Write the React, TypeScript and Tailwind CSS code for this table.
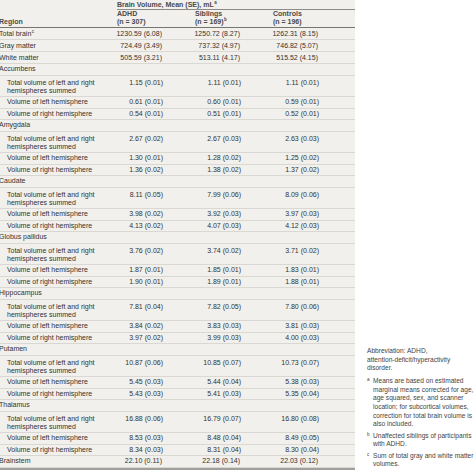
import type { ReactNode } from "react";

type Triple = [string, string, string];

type Group = {
  name: string;
  total: Triple;
  left: Triple;
  right: Triple;
};

function Sup({ children }: { children: ReactNode }) {
  return <span className="relative -top-[2.5px] ml-[0.5px] text-[4.5px] leading-[0]">{children}</span>;
}

const topRows: { label: ReactNode; values: Triple }[] = [
  {
    label: (
      <>
        Total brain<Sup>c</Sup>
      </>
    ),
    values: ["1230.59 (6.08)", "1250.72 (8.27)", "1262.31 (8.15)"]
  },
  { label: "Gray matter", values: ["724.49 (3.49)", "737.32 (4.97)", "746.82 (5.07)"] },
  { label: "White matter", values: ["505.59 (3.21)", "513.11 (4.17)", "515.52 (4.15)"] }
];

const groups: Group[] = [
  {
    name: "Accumbens",
    total: ["1.15 (0.01)", "1.11 (0.01)", "1.11 (0.01)"],
    left: ["0.61 (0.01)", "0.60 (0.01)", "0.59 (0.01)"],
    right: ["0.54 (0.01)", "0.51 (0.01)", "0.52 (0.01)"]
  },
  {
    name: "Amygdala",
    total: ["2.67 (0.02)", "2.67 (0.03)", "2.63 (0.03)"],
    left: ["1.30 (0.01)", "1.28 (0.02)", "1.25 (0.02)"],
    right: ["1.36 (0.02)", "1.38 (0.02)", "1.37 (0.02)"]
  },
  {
    name: "Caudate",
    total: ["8.11 (0.05)", "7.99 (0.06)", "8.09 (0.06)"],
    left: ["3.98 (0.02)", "3.92 (0.03)", "3.97 (0.03)"],
    right: ["4.13 (0.02)", "4.07 (0.03)", "4.12 (0.03)"]
  },
  {
    name: "Globus pallidus",
    total: ["3.76 (0.02)", "3.74 (0.02)", "3.71 (0.02)"],
    left: ["1.87 (0.01)", "1.85 (0.01)", "1.83 (0.01)"],
    right: ["1.90 (0.01)", "1.89 (0.01)", "1.88 (0.01)"]
  },
  {
    name: "Hippocampus",
    total: ["7.81 (0.04)", "7.82 (0.05)", "7.80 (0.06)"],
    left: ["3.84 (0.02)", "3.83 (0.03)", "3.81 (0.03)"],
    right: ["3.97 (0.02)", "3.99 (0.03)", "4.00 (0.03)"]
  },
  {
    name: "Putamen",
    total: ["10.87 (0.06)", "10.85 (0.07)", "10.73 (0.07)"],
    left: ["5.45 (0.03)", "5.44 (0.04)", "5.38 (0.03)"],
    right: ["5.43 (0.03)", "5.41 (0.03)", "5.35 (0.04)"]
  },
  {
    name: "Thalamus",
    total: ["16.88 (0.06)", "16.79 (0.07)", "16.80 (0.08)"],
    left: ["8.53 (0.03)", "8.48 (0.04)", "8.49 (0.05)"],
    right: ["8.34 (0.03)", "8.31 (0.04)", "8.30 (0.04)"]
  }
];

function Values({ values }: { values: Triple }) {
  return (
    <>
      {values.map((v, i) => (
        <div key={i} className="w-[78px] shrink-0">
          <div className="w-[46px] text-right whitespace-nowrap">{v}</div>
        </div>
      ))}
    </>
  );
}

function Row({
  label,
  values,
  indent,
  tall,
  height = "h-[11.5px]"
}: {
  label: ReactNode;
  values?: Triple;
  indent?: boolean;
  tall?: boolean;
  height?: string;
}) {
  return (
    <div
      className={`flex border-b border-[#d9d8d3] ${
        tall ? "h-[21.5px] items-start pt-[3px]" : `${height} items-center`
      }`}
    >
      <div className={`w-[117px] shrink-0 whitespace-nowrap ${indent ? "pl-[7px]" : "-ml-[1px]"}`}>{label}</div>
      {values ? <Values values={values} /> : null}
    </div>
  );
}

export default function App() {
  return (
    <div className="flex h-[470px] w-[474px] overflow-hidden bg-white text-[#333]">
      <div className="w-[355px] shrink-0 bg-[#f1f0ec] font-['Liberation_Sans',Arial,sans-serif] text-[7px] leading-[8px]">
        {/* spanning header */}
        <div className="flex h-[9.5px]">
          <div className="w-[117px] shrink-0" />
          <div className="flex flex-1 items-end border-b-[1.5px] border-[#8c8b88] pb-[1px] font-bold leading-[7px] text-[#4a4a4a]">
            <span>
              Brain Volume, Mean (SE), mL<Sup>a</Sup>
            </span>
          </div>
        </div>

        {/* column headers */}
        <div className="flex h-[18.5px] items-end border-b-[1.5px] border-[#76756f] pb-[1.5px] font-bold text-[#4a4a4a]">
          <div className="-ml-[1px] w-[118px] shrink-0">Region</div>
          <div className="w-[78px] shrink-0">
            ADHD
            <br />
            (n = 307)
          </div>
          <div className="w-[78px] shrink-0">
            Siblings
            <br />
            (n = 169)<Sup>b</Sup>
          </div>
          <div className="w-[78px] shrink-0">
            Controls
            <br />
            (n = 196)
          </div>
        </div>

        {topRows.map((r, i) => (
          <Row key={i} label={r.label} values={r.values} height="h-[12px]" />
        ))}

        {groups.map((g) => (
          <div key={g.name}>
            <Row label={g.name} />
            <Row
              indent
              tall
              label={
                <>
                  Total volume of left and right
                  <br />
                  hemispheres summed
                </>
              }
              values={g.total}
            />
            <Row indent label="Volume of left hemisphere" values={g.left} />
            <Row indent label="Volume of right hemisphere" values={g.right} />
          </div>
        ))}

        <Row label="Brainstem" values={["22.10 (0.11)", "22.18 (0.14)", "22.03 (0.12)"]} />
        <div className="h-[5px] bg-[#a09f9b]" />
      </div>

      {/* footnotes */}
      <div className="ml-[12px] flex flex-col justify-end pb-[1px] font-['Liberation_Sans',Arial,sans-serif] text-[6.6px] leading-[8.7px] text-[#444] whitespace-nowrap">
        <div>
          Abbreviation: ADHD,
          <br />
          attention-deficit/hyperactivity
          <br />
          disorder.
        </div>
        <Note mark="a" className="mt-[4px]">
          Means are based on estimated
          <br />
          marginal means corrected for age,
          <br />
          age squared, sex, and scanner
          <br />
          location; for subcortical volumes,
          <br />
          correction for total brain volume is
          <br />
          also included.
        </Note>
        <Note mark="b" className="mt-[2.5px]">
          Unaffected siblings of participants
          <br />
          with ADHD.
        </Note>
        <Note mark="c" className="mt-[2.5px]">
          Sum of total gray and white matter
          <br />
          volumes.
        </Note>
      </div>
    </div>
  );
}

function Note({ mark, className, children }: { mark: string; className?: string; children: ReactNode }) {
  return (
    <div className={`flex ${className ?? ""}`}>
      <span className="w-[6px] shrink-0 text-[4.5px] leading-[6px]">{mark}</span>
      <div>{children}</div>
    </div>
  );
}
